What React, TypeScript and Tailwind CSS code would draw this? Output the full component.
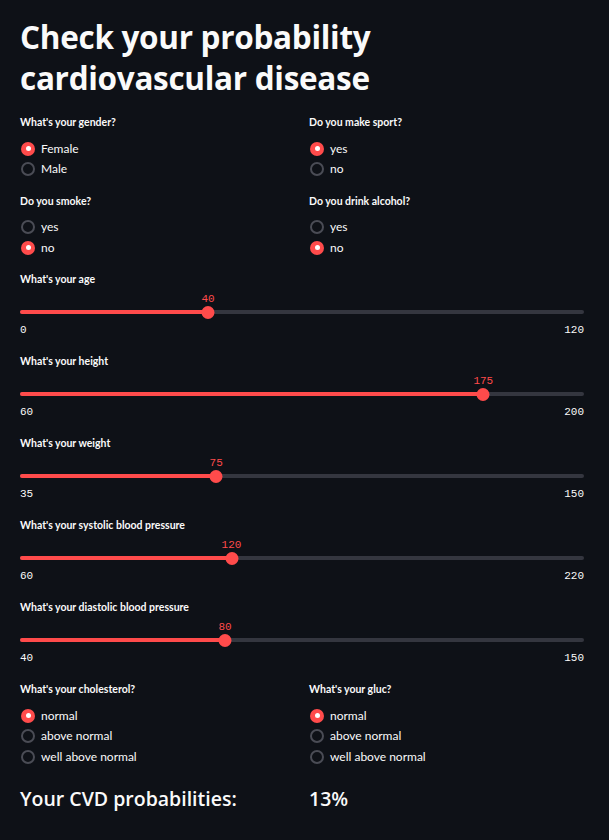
import React from "react";

const SANS = { fontFamily: '"Open Sans", "Noto Sans", sans-serif' };
const LATO = { fontFamily: 'Lato, "Open Sans", sans-serif' };

function Radio({ options, selected }: { options: string[]; selected: number }) {
  return (
    <div className="flex flex-col">
      {options.map((o, i) => (
        <div key={o} className="flex items-center h-[20.5px]">
          {i === selected ? (
            <span className="w-[14px] h-[14px] rounded-full bg-[#ff4b4b] flex items-center justify-center ml-[1px]">
              <span className="w-[5px] h-[5px] rounded-full bg-white" />
            </span>
          ) : (
            <span className="w-[14px] h-[14px] rounded-full border-2 border-[#4a4c55] ml-[1px]" />
          )}
          <span className="ml-[6px] text-[12px] text-[#fafafa]" style={LATO}>
            {o}
          </span>
        </div>
      ))}
    </div>
  );
}

function Label({ children }: { children: React.ReactNode }) {
  return (
    <div className="h-[14px] leading-[14px] text-[10.5px] font-bold text-[#fafafa]" style={LATO}>
      {children}
    </div>
  );
}

function RadioGroup({ label, options, selected }: { label: string; options: string[]; selected: number }) {
  return (
    <div>
      <Label>{label}</Label>
      <div className="mt-[9.5px]">
        <Radio options={options} selected={selected} />
      </div>
    </div>
  );
}

function Slider({ label, min, max, value }: { label: string; min: number; max: number; value: number }) {
  const pct = ((value - min) / (max - min)) * 100;
  return (
    <div>
      <Label>{label}</Label>
      <div className="relative h-[14px] mt-[6px]">
        <span
          className="absolute top-0 -translate-x-1/2 text-[11px] leading-[14px] text-[#ff4b4b]"
          style={{ left: `${pct}%`, fontFamily: '"Liberation Mono", monospace' }}
        >
          {value}
        </span>
      </div>
      <div className="relative h-[12px] flex items-center">
        <div className="w-full h-[4px] rounded-full bg-[#34363f]">
          <div className="h-full rounded-full bg-[#ff4b4b]" style={{ width: `${pct}%` }} />
        </div>
        <span
          className="absolute top-[-0.5px] w-[13px] h-[13px] -translate-x-1/2 rounded-full bg-[#ff4b4b]"
          style={{ left: `${pct}%` }}
        />
      </div>
      <div
        className="mt-[5px] h-[14px] leading-[14px] flex justify-between text-[11px] text-[#fafafa]"
        style={{ fontFamily: '"Liberation Mono", monospace' }}
      >
        <span>{min}</span>
        <span>{max}</span>
      </div>
    </div>
  );
}

export default function App() {
  return (
    <div className="min-h-[840px] w-full bg-[#0e1117] text-[#fafafa]" style={SANS}>
      <div className="px-[20px] pt-[16px] w-[604px]">
        <h1 className="text-[31.5px] leading-[41px] font-bold tracking-[-0.3px]">
          Check your probability
          <br />
          cardiovascular disease
        </h1>

        <div className="grid grid-cols-2 gap-x-[14px] mt-[17px]">
          <div className="flex flex-col gap-[14px]">
            <RadioGroup label="What's your gender?" options={["Female", "Male"]} selected={0} />
            <RadioGroup label="Do you smoke?" options={["yes", "no"]} selected={1} />
          </div>
          <div className="flex flex-col gap-[14px]">
            <RadioGroup label="Do you make sport?" options={["yes", "no"]} selected={0} />
            <RadioGroup label="Do you drink alcohol?" options={["yes", "no"]} selected={1} />
          </div>
        </div>

        <div className="flex flex-col gap-[17px] mt-[14px]">
          <Slider label="What's your age" min={0} max={120} value={40} />
          <Slider label="What's your height" min={60} max={200} value={175} />
          <Slider label="What's your weight" min={35} max={150} value={75} />
          <Slider label="What's your systolic blood pressure" min={60} max={220} value={120} />
          <Slider label="What's your diastolic blood pressure" min={40} max={150} value={80} />
        </div>

        <div className="grid grid-cols-2 gap-x-[14px] mt-[17px]">
          <RadioGroup
            label="What's your cholesterol?"
            options={["normal", "above normal", "well above normal"]}
            selected={0}
          />
          <RadioGroup
            label="What's your gluc?"
            options={["normal", "above normal", "well above normal"]}
            selected={0}
          />
        </div>

        <div className="grid grid-cols-2 gap-x-[14px] mt-[17px] h-[30px] items-center">
          <div className="text-[19.5px] font-semibold">Your CVD probabilities:</div>
          <div className="text-[19.5px] font-semibold">13%</div>
        </div>
      </div>
    </div>
  );
}
